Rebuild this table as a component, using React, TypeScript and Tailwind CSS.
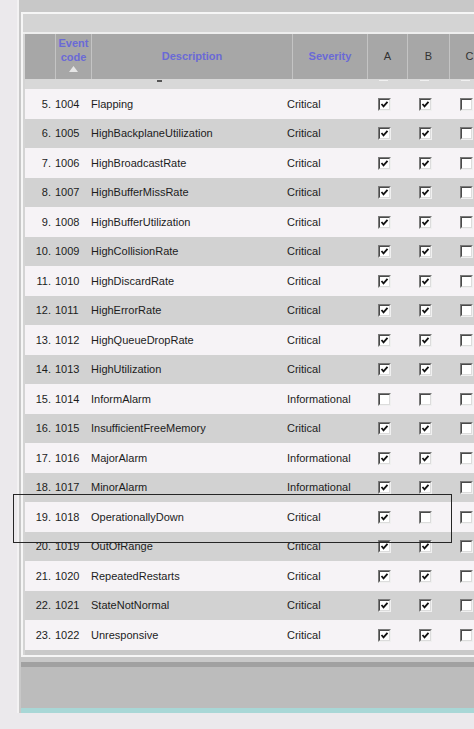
import React from "react"

type Row = {
  n: number
  code: string
  desc: string
  sev: string
  a: boolean
  b: boolean
}

const rows: Row[] = [
  { n: 5, code: "1004", desc: "Flapping", sev: "Critical", a: true, b: true },
  { n: 6, code: "1005", desc: "HighBackplaneUtilization", sev: "Critical", a: true, b: true },
  { n: 7, code: "1006", desc: "HighBroadcastRate", sev: "Critical", a: true, b: true },
  { n: 8, code: "1007", desc: "HighBufferMissRate", sev: "Critical", a: true, b: true },
  { n: 9, code: "1008", desc: "HighBufferUtilization", sev: "Critical", a: true, b: true },
  { n: 10, code: "1009", desc: "HighCollisionRate", sev: "Critical", a: true, b: true },
  { n: 11, code: "1010", desc: "HighDiscardRate", sev: "Critical", a: true, b: true },
  { n: 12, code: "1011", desc: "HighErrorRate", sev: "Critical", a: true, b: true },
  { n: 13, code: "1012", desc: "HighQueueDropRate", sev: "Critical", a: true, b: true },
  { n: 14, code: "1013", desc: "HighUtilization", sev: "Critical", a: true, b: true },
  { n: 15, code: "1014", desc: "InformAlarm", sev: "Informational", a: false, b: false },
  { n: 16, code: "1015", desc: "InsufficientFreeMemory", sev: "Critical", a: true, b: true },
  { n: 17, code: "1016", desc: "MajorAlarm", sev: "Informational", a: true, b: true },
  { n: 18, code: "1017", desc: "MinorAlarm", sev: "Informational", a: true, b: true },
  { n: 19, code: "1018", desc: "OperationallyDown", sev: "Critical", a: true, b: false },
  { n: 20, code: "1019", desc: "OutOfRange", sev: "Critical", a: true, b: true },
  { n: 21, code: "1020", desc: "RepeatedRestarts", sev: "Critical", a: true, b: true },
  { n: 22, code: "1021", desc: "StateNotNormal", sev: "Critical", a: true, b: true },
  { n: 23, code: "1022", desc: "Unresponsive", sev: "Critical", a: true, b: true },
]

// classic sunken windows checkbox
function Check({ on }: { on: boolean }) {
  return (
    <div className="w-[13px] h-[13px] shrink-0 border-t border-l border-[#7a7a7a] border-r border-b border-r-[#f0f0f0] border-b-[#f0f0f0] bg-white">
      <div className="w-full h-full border-t border-l border-[#4a4a4a] border-r border-b border-r-[#dcdcdc] border-b-[#dcdcdc]">
        {on && (
          <svg width="9" height="9" viewBox="0 0 9 9" className="block">
            <polyline points="1.5,4 3.5,6.3 7.5,1.8" fill="none" stroke="#111" strokeWidth="1.8" />
          </svg>
        )}
      </div>
    </div>
  )
}

export default function App() {
  return (
    <div className="relative w-[474px] h-[729px] overflow-hidden bg-[#ebe9ec] font-['Liberation_Sans',Arial,sans-serif] text-[11px] text-[#1c1c1c]">
      {/* outer panel */}
      <div className="ml-[17px] w-[480px] border-l-2 border-[#f3f2f3] bg-[#c8c8c8] pl-[2px] pt-[12px]">
        {/* inner box */}
        <div className="border-l-2 border-t-2 border-b-2 border-[#f6f6f6] bg-[#d4d4d4]">
          <div className="h-[18px]" />
          <div className="h-[2px] bg-[#eeeeee]" />
          <div className="pl-[2px]">
            {/* header */}
            <div className="flex h-[45px] bg-[#a7a7a7] font-bold text-[#6a6ad6]">
              <div className="w-[30px]" />
              <div className="w-[36px] border-l border-[#c4c4c4] flex flex-col items-center pt-[2px] leading-[14px]">
                <span>Event</span>
                <span>code</span>
                <svg width="9" height="6" viewBox="0 0 9 6" className="mt-[2px]">
                  <polygon points="4.5,0 9,6 0,6" fill="#e6e6e6" />
                </svg>
              </div>
              <div className="w-[201px] border-l border-[#c4c4c4] flex items-center justify-center">Description</div>
              <div className="w-[75px] border-l border-[#c4c4c4] flex items-center justify-center">Severity</div>
              <div className="w-[40px] border-l border-[#c4c4c4] flex items-center justify-center font-normal text-[#333]">A</div>
              <div className="w-[42px] border-l border-[#c4c4c4] flex items-center justify-center font-normal text-[#333]">B</div>
              <div className="w-[40px] border-l border-[#c4c4c4] flex items-center justify-center font-normal text-[#333]">C</div>
            </div>
            {/* clipped previous row */}
            <div className="flex h-[10px] bg-[#d8d8d8]">
              <div className="w-[132px]" />
              <div className="w-[5px] h-[2px] mt-[1px] bg-[#555]" />
              <div className="w-[217px]" />
              <div className="w-[9px] h-[1px] mt-[1px] bg-[#f0f0f0]" />
              <div className="w-[32px]" />
              <div className="w-[9px] h-[1px] mt-[1px] bg-[#f0f0f0]" />
              <div className="w-[32px]" />
              <div className="w-[9px] h-[1px] mt-[1px] bg-[#f0f0f0]" />
            </div>
            {/* body rows */}
            {rows.map((r, i) => (
              <div
                key={r.n}
                className={`flex items-center ${i % 2 === 0 ? "h-[30px] bg-[#f6f3f6]" : "h-[29px] bg-[#d2d2d2]"}`}
              >
                <div className="w-[30px] text-right pr-[4px]">{r.n}.</div>
                <div className="w-[36px]">{r.code}</div>
                <div className="w-[196px]">{r.desc}</div>
                <div className="w-[91px]">{r.sev}</div>
                <div className="w-[41px]">
                  <Check on={r.a} />
                </div>
                <div className="w-[41px]">
                  <Check on={r.b} />
                </div>
                <div className="w-[20px]">
                  <Check on={false} />
                </div>
              </div>
            ))}
            <div className="h-[5px] bg-[#c9c9c9]" />
          </div>
        </div>
        <div className="h-[5px]" />
        <div className="h-[5px] bg-[#a1a1a1]" />
        <div className="h-[41px] bg-[#bcbcbc]" />
        <div className="h-[5px] bg-[#a8d7d6]" />
      </div>

      {/* focus rectangle */}
      <div className="absolute left-[13px] top-[494px] w-[439px] h-[49px] border border-[#262626] pointer-events-none" />
    </div>
  )
}
